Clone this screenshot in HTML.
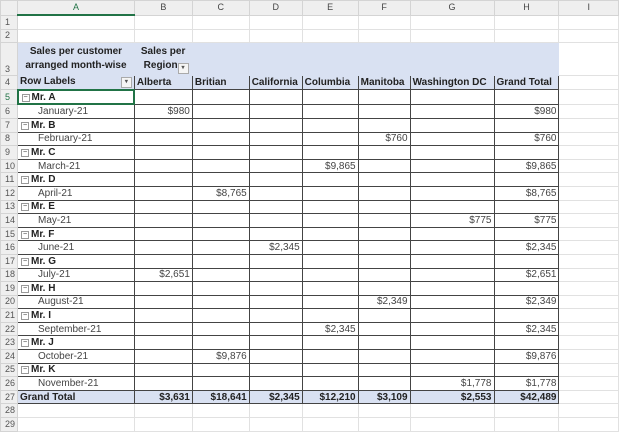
<!DOCTYPE html>
<html><head><style>
body{margin:0;width:619px;height:433px;overflow:hidden;background:#fff;font-family:"Liberation Sans",Arial,sans-serif;font-size:10px;color:#222}
table{border-collapse:collapse;table-layout:fixed;position:absolute;left:0;top:0}
td{border:1px solid #e1e1e1;padding:0 2px;white-space:nowrap;overflow:hidden;height:12.6px;line-height:11px}
tr.top td{height:13px;background:#efefef;color:#444;text-align:center;border-color:#d4d4d4;font-size:9px}
td.rh{background:#efefef;color:#555;font-size:9px;text-align:left;padding-left:4px;border-color:#d4d4d4}
td.p{border:1px solid #444}
td.hd{background:#d9e1f2;font-weight:bold;border:1px solid #444}
td.band{background:#d9e1f2;border-color:#d9e1f2}
td.g{background:#d9e1f2;font-weight:bold;border:1px solid #444;text-align:right}
td.n{text-align:right;color:#444}
td.m{padding-left:20px;color:#444}
.b{display:inline-block;width:6px;height:6px;border:1px solid #999;font-size:7px;line-height:6px;text-align:center;color:#777;margin:0 2px 0 1px;vertical-align:1px}
.dd{display:inline-block;width:9px;height:9px;border:1px solid #aaa;background:#f5f5f5;vertical-align:-1px;font-size:6px;text-align:center;line-height:9px;color:#555}
</style></head><body>
<table>
<colgroup><col style="width:17px"><col style="width:117px"><col style="width:58px"><col style="width:57px"><col style="width:53px"><col style="width:56px"><col style="width:52px"><col style="width:84px"><col style="width:65px"><col style="width:60px"></colgroup>
<tr class="top"><td></td><td style="border-bottom:2px solid #217346;color:#217346">A</td><td>B</td><td>C</td><td>D</td><td>E</td><td>F</td><td>G</td><td>H</td><td>I</td></tr>
<tr><td class="rh">1</td><td></td><td></td><td></td><td></td><td></td><td></td><td></td><td></td><td></td></tr>
<tr><td class="rh">2</td><td></td><td></td><td></td><td></td><td></td><td></td><td></td><td></td><td></td></tr>
<tr><td class="rh" style="height:32px;vertical-align:bottom">3</td><td class="band" style="font-weight:bold;text-align:center;line-height:14px;color:#222">Sales per customer<br>arranged month-wise</td><td class="band" style="font-weight:bold;line-height:14px;padding-left:6px;color:#222">Sales per<br>&nbsp;Region<span class="dd">▾</span></td><td class="band"></td><td class="band"></td><td class="band"></td><td class="band"></td><td class="band"></td><td class="band"></td><td></td></tr>
<tr><td class="rh">4</td><td class="hd">Row Labels<span class="dd" style="float:right;margin-top:1px">▾</span></td><td class="hd">Alberta</td><td class="hd">Britian</td><td class="hd">California</td><td class="hd">Columbia</td><td class="hd">Manitoba</td><td class="hd">Washington DC</td><td class="hd">Grand Total</td><td></td></tr>
<tr><td class="rh" style="color:#217346">5</td><td class="p" style="font-weight:bold;border:2px solid #217346"><span class="b">−</span>Mr. A</td><td class="p"></td><td class="p"></td><td class="p"></td><td class="p"></td><td class="p"></td><td class="p"></td><td class="p"></td><td></td></tr>
<tr><td class="rh">6</td><td class="p m">January-21</td><td class="p n">$980</td><td class="p"></td><td class="p"></td><td class="p"></td><td class="p"></td><td class="p"></td><td class="p n">$980</td><td></td></tr>
<tr><td class="rh">7</td><td class="p" style="font-weight:bold"><span class="b">−</span>Mr. B</td><td class="p"></td><td class="p"></td><td class="p"></td><td class="p"></td><td class="p"></td><td class="p"></td><td class="p"></td><td></td></tr>
<tr><td class="rh">8</td><td class="p m">February-21</td><td class="p"></td><td class="p"></td><td class="p"></td><td class="p"></td><td class="p n">$760</td><td class="p"></td><td class="p n">$760</td><td></td></tr>
<tr><td class="rh">9</td><td class="p" style="font-weight:bold"><span class="b">−</span>Mr. C</td><td class="p"></td><td class="p"></td><td class="p"></td><td class="p"></td><td class="p"></td><td class="p"></td><td class="p"></td><td></td></tr>
<tr><td class="rh">10</td><td class="p m">March-21</td><td class="p"></td><td class="p"></td><td class="p"></td><td class="p n">$9,865</td><td class="p"></td><td class="p"></td><td class="p n">$9,865</td><td></td></tr>
<tr><td class="rh">11</td><td class="p" style="font-weight:bold"><span class="b">−</span>Mr. D</td><td class="p"></td><td class="p"></td><td class="p"></td><td class="p"></td><td class="p"></td><td class="p"></td><td class="p"></td><td></td></tr>
<tr><td class="rh">12</td><td class="p m">April-21</td><td class="p"></td><td class="p n">$8,765</td><td class="p"></td><td class="p"></td><td class="p"></td><td class="p"></td><td class="p n">$8,765</td><td></td></tr>
<tr><td class="rh">13</td><td class="p" style="font-weight:bold"><span class="b">−</span>Mr. E</td><td class="p"></td><td class="p"></td><td class="p"></td><td class="p"></td><td class="p"></td><td class="p"></td><td class="p"></td><td></td></tr>
<tr><td class="rh">14</td><td class="p m">May-21</td><td class="p"></td><td class="p"></td><td class="p"></td><td class="p"></td><td class="p"></td><td class="p n">$775</td><td class="p n">$775</td><td></td></tr>
<tr><td class="rh">15</td><td class="p" style="font-weight:bold"><span class="b">−</span>Mr. F</td><td class="p"></td><td class="p"></td><td class="p"></td><td class="p"></td><td class="p"></td><td class="p"></td><td class="p"></td><td></td></tr>
<tr><td class="rh">16</td><td class="p m">June-21</td><td class="p"></td><td class="p"></td><td class="p n">$2,345</td><td class="p"></td><td class="p"></td><td class="p"></td><td class="p n">$2,345</td><td></td></tr>
<tr><td class="rh">17</td><td class="p" style="font-weight:bold"><span class="b">−</span>Mr. G</td><td class="p"></td><td class="p"></td><td class="p"></td><td class="p"></td><td class="p"></td><td class="p"></td><td class="p"></td><td></td></tr>
<tr><td class="rh">18</td><td class="p m">July-21</td><td class="p n">$2,651</td><td class="p"></td><td class="p"></td><td class="p"></td><td class="p"></td><td class="p"></td><td class="p n">$2,651</td><td></td></tr>
<tr><td class="rh">19</td><td class="p" style="font-weight:bold"><span class="b">−</span>Mr. H</td><td class="p"></td><td class="p"></td><td class="p"></td><td class="p"></td><td class="p"></td><td class="p"></td><td class="p"></td><td></td></tr>
<tr><td class="rh">20</td><td class="p m">August-21</td><td class="p"></td><td class="p"></td><td class="p"></td><td class="p"></td><td class="p n">$2,349</td><td class="p"></td><td class="p n">$2,349</td><td></td></tr>
<tr><td class="rh">21</td><td class="p" style="font-weight:bold"><span class="b">−</span>Mr. I</td><td class="p"></td><td class="p"></td><td class="p"></td><td class="p"></td><td class="p"></td><td class="p"></td><td class="p"></td><td></td></tr>
<tr><td class="rh">22</td><td class="p m">September-21</td><td class="p"></td><td class="p"></td><td class="p"></td><td class="p n">$2,345</td><td class="p"></td><td class="p"></td><td class="p n">$2,345</td><td></td></tr>
<tr><td class="rh">23</td><td class="p" style="font-weight:bold"><span class="b">−</span>Mr. J</td><td class="p"></td><td class="p"></td><td class="p"></td><td class="p"></td><td class="p"></td><td class="p"></td><td class="p"></td><td></td></tr>
<tr><td class="rh">24</td><td class="p m">October-21</td><td class="p"></td><td class="p n">$9,876</td><td class="p"></td><td class="p"></td><td class="p"></td><td class="p"></td><td class="p n">$9,876</td><td></td></tr>
<tr><td class="rh">25</td><td class="p" style="font-weight:bold"><span class="b">−</span>Mr. K</td><td class="p"></td><td class="p"></td><td class="p"></td><td class="p"></td><td class="p"></td><td class="p"></td><td class="p"></td><td></td></tr>
<tr><td class="rh">26</td><td class="p m">November-21</td><td class="p"></td><td class="p"></td><td class="p"></td><td class="p"></td><td class="p"></td><td class="p n">$1,778</td><td class="p n">$1,778</td><td></td></tr>
<tr><td class="rh">27</td><td class="hd">Grand Total</td><td class="g">$3,631</td><td class="g">$18,641</td><td class="g">$2,345</td><td class="g">$12,210</td><td class="g">$3,109</td><td class="g">$2,553</td><td class="g">$42,489</td><td></td></tr>
<tr><td class="rh">28</td><td></td><td></td><td></td><td></td><td></td><td></td><td></td><td></td><td></td></tr>
<tr><td class="rh">29</td><td></td><td></td><td></td><td></td><td></td><td></td><td></td><td></td><td></td></tr>
</table>
</body></html>
